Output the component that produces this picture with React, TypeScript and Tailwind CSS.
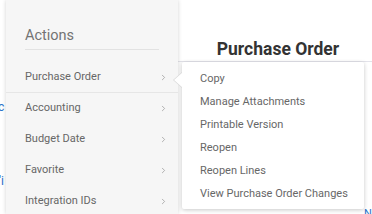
import { ChevronRight } from 'lucide-react'

const actions = ['Purchase Order', 'Accounting', 'Budget Date', 'Favorite', 'Integration IDs']

const subActions = [
  'Copy',
  'Manage Attachments',
  'Printable Version',
  'Reopen',
  'Reopen Lines',
  'View Purchase Order Changes',
]

export default function App() {
  return (
    <div
      className="relative flex h-[214px] w-[372px] overflow-hidden bg-white"
      style={{ fontFamily: 'Roboto, "Liberation Sans", sans-serif' }}
    >
      {/* page behind the menu */}
      <div className="flex w-[6px] flex-col text-[12px] leading-none text-[#2a73c9]">
        <span className="mt-[101px] -ml-[2px]">c</span>
        <span className="mt-[62px] -ml-[1px]">'i</span>
      </div>

      {/* actions panel */}
      <div className="z-10 flex w-[172px] flex-col bg-[#f6f6f6] shadow-[0_0_4px_rgba(0,0,0,0.18)]">
        <div className="mx-[19px] mt-[26px] border-b border-[#e2e2e2] pb-[3px] text-[14.5px] leading-[20px] text-[#737373]">
          Actions
        </div>
        <div className="mt-[12px] flex flex-col">
          {actions.map((label, i) => (
            <div
              key={label}
              className={`flex h-[31px] items-center justify-between pl-[19px] pr-[10px] text-[11px] text-[#676767] ${
                i === 0 ? 'border-b border-[#e6e6e6]' : ''
              }`}
            >
              <span>{label}</span>
              <ChevronRight className="h-[9px] w-[9px] text-[#9a9a9a]" strokeWidth={2} />
            </div>
          ))}
        </div>
      </div>

      {/* record header */}
      <div className="flex flex-1 flex-col">
        <div className="flex h-[62px] items-end justify-center border-b border-[#e3e3ea] pl-[6px]">
          <h1 className="text-[17.5px] font-bold leading-[24px] text-[#333333]">Purchase Order</h1>
        </div>
      </div>

      {/* submenu */}
      <div className="absolute left-[182px] top-[62px] z-20 w-[182px] rounded-[2px] bg-white pt-[6px] pb-[3px] shadow-[0_1px_4px_rgba(0,0,0,0.22)]">
        <div className="absolute -left-[9px] top-[10px] h-0 w-0 border-y-[8px] border-r-[9px] border-y-transparent border-r-[#d8d8d8]" />
        <div className="absolute -left-[8px] top-[10px] h-0 w-0 border-y-[8px] border-r-[9px] border-y-transparent border-r-white" />
        {subActions.map((label) => (
          <div key={label} className="flex h-[23px] items-center pl-[18px] text-[11px] text-[#676767]">
            {label}
          </div>
        ))}
      </div>

      <span className="absolute left-[364px] top-[208px] text-[11px] leading-none text-[#2a73c9]">N</span>
    </div>
  )
}
